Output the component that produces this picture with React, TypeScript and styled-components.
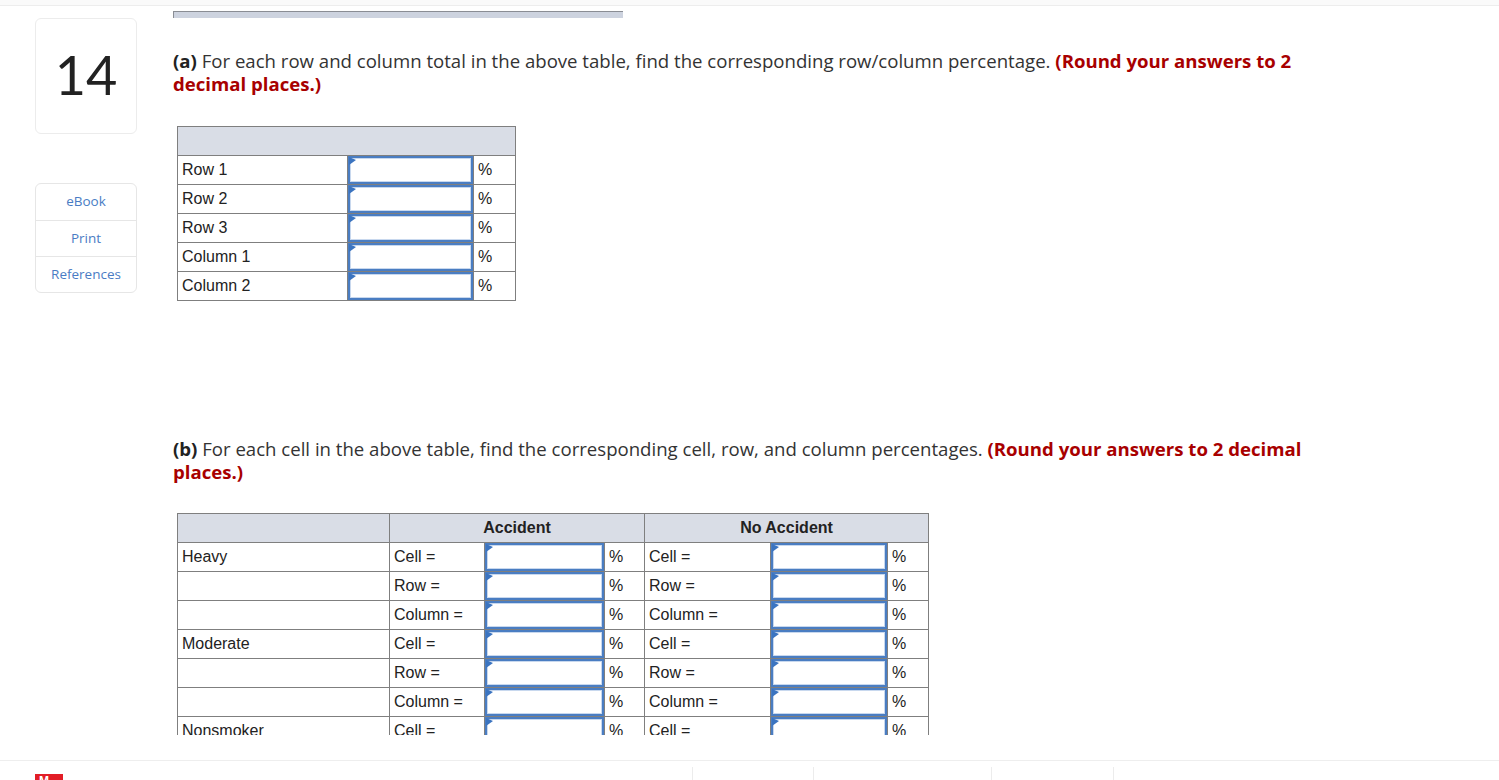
import React from 'react';
import styled, { createGlobalStyle } from 'styled-components';

const GlobalStyle = createGlobalStyle`
  html, body { margin: 0; padding: 0; background: #fff; }
  body { font-family: "Open Sans", Lato, sans-serif; color: #222; }
`;

const Page = styled.div`
  width: 1499px;
  height: 780px;
  display: flex;
  flex-direction: column;
  overflow: hidden;
  background: #fff;
`;

const TopBar = styled.div`
  flex: none;
  height: 5px;
  background: #fafafa;
  border-bottom: 1px solid #ededed;
`;

const Main = styled.div`
  flex: none;
  height: 729px;
  display: flex;
  overflow: hidden;
`;

const Aside = styled.aside`
  flex: none;
  width: 173px;
  box-sizing: border-box;
  padding: 12px 0 0 35px;
  display: flex;
  flex-direction: column;
  & > * { flex-shrink: 0; }
`;

const NumberBox = styled.div`
  width: 102px;
  height: 116px;
  box-sizing: border-box;
  border: 1px solid #ececec;
  border-radius: 6px;
  display: flex;
  align-items: center;
  justify-content: center;
  font-family: Lato, "Open Sans", sans-serif;
  font-size: 54px;
  color: #222;
  padding-bottom: 4px;
`;

const LinkList = styled.div`
  margin-top: 49px;
  width: 102px;
  box-sizing: border-box;
  border: 1px solid #e6e6e6;
  border-radius: 6px;
  display: flex;
  flex-direction: column;
`;

const LinkItem = styled.a`
  height: 36px;
  display: flex;
  align-items: center;
  justify-content: center;
  font-size: 13.5px;
  color: #4a7cc4;
  text-decoration: none;
  padding-bottom: 2px;
  box-sizing: border-box;
  & + & { border-top: 1px solid #e6e6e6; }
`;

const Content = styled.div`
  flex: 1;
  padding-top: 5px;
  display: flex;
  flex-direction: column;
  align-items: flex-start;
  & > * { flex-shrink: 0; }
`;

const Stub = styled.div`
  width: 450px;
  height: 7px;
  box-sizing: border-box;
  background: #cdd3df;
  border-top: 1px solid #8a8d94;
  border-left: 1px solid #8a8d94;
`;

const Prompt = styled.p<{ $gap: number }>`
  margin: ${p => p.$gap}px 0 0 0;
  max-width: 1142px;
  font-size: 18.6px;
  line-height: 23px;
  color: #333;
`;

const Label = styled.b`
  color: #222;
  font-weight: 700;
`;

const Hint = styled.b`
  color: #a80000;
  font-weight: 700;
`;

const DataTable = styled.table<{ $gap: number; $w: number }>`
  margin: ${p => p.$gap}px 0 0 4px;
  width: ${p => p.$w}px;
  border-collapse: collapse;
  table-layout: fixed;
  font-family: "Liberation Sans", Arial, sans-serif;
  font-size: 16px;
  color: #222;
`;

const Col = styled.col<{ $w: number }>`
  width: ${p => p.$w}px;
`;

const Row = styled.tr`
  height: 28.8px;
`;

const HeadCell = styled.th`
  background: #d9dde6;
  border: 1px solid #7f7f7f;
  padding: 0;
  font-weight: 700;
  text-align: center;
  color: #222;
`;

const Cell = styled.td`
  border: 1px solid #7f7f7f;
  padding: 0 4px;
  text-align: left;
  white-space: nowrap;
  vertical-align: middle;
`;

const InputCell = styled.td`
  border: 1px solid #7f7f7f;
  padding: 0;
  position: relative;
  &::before {
    content: '';
    position: absolute;
    left: 1px;
    top: 1px;
    width: 0;
    height: 0;
    border-left: 7px solid #3b74c0;
    border-top: 3px solid transparent;
    border-bottom: 5px solid transparent;
    z-index: 1;
  }
`;

const Answer = styled.input`
  display: block;
  width: 100%;
  height: 28px;
  box-sizing: border-box;
  margin: 0;
  border: 2px solid #4a7dc2;
  box-shadow: inset 0 0 0 1px #c8d8ee;
  background: #fff;
  outline: none;
`;

const Spacer = styled.div`
  flex: none;
  height: 25px;
`;

const Footer = styled.footer`
  flex: 1;
  border-top: 1px solid #eeeeee;
  display: flex;
  align-items: flex-start;
`;

const Logo = styled.div`
  margin: 13px 0 0 35px;
  width: 28px;
  height: 20px;
  background: #e21d26;
  color: #fff;
  font-family: "Liberation Sans", Arial, sans-serif;
  font-weight: 700;
  font-size: 12px;
  line-height: 14px;
  padding-left: 4px;
  box-sizing: border-box;
`;

const FooterNav = styled.nav`
  margin: 6px 0 0 629px;
  display: flex;
`;

const NavItem = styled.div<{ $w: number }>`
  width: ${p => p.$w}px;
  height: 20px;
  border-left: 1px solid #ececec;
  &:last-child { border-right: 1px solid #ececec; }
`;

const partA = ['Row 1', 'Row 2', 'Row 3', 'Column 1', 'Column 2'];

const groups = ['Heavy', 'Moderate', 'Nonsmoker'];
const subs = ['Cell =', 'Row =', 'Column ='];

export default function App() {
  return (
    <>
      <GlobalStyle />
      <Page>
        <TopBar />
        <Main>
          <Aside>
            <NumberBox>14</NumberBox>
            <LinkList>
              <LinkItem>eBook</LinkItem>
              <LinkItem>Print</LinkItem>
              <LinkItem>References</LinkItem>
            </LinkList>
          </Aside>
          <Content>
            <Stub />
            <Prompt $gap={31}>
              <Label>(a)</Label> For each row and column total in the above table, find the corresponding
              row/column percentage. <Hint>(Round your answers to 2 decimal places.)</Hint>
            </Prompt>
            <DataTable $gap={31} $w={339}>
              <colgroup>
                <Col $w={170} />
                <Col $w={126} />
                <Col $w={42} />
              </colgroup>
              <thead>
                <Row>
                  <HeadCell colSpan={3} />
                </Row>
              </thead>
              <tbody>
                {partA.map(l => (
                  <Row key={l}>
                    <Cell>{l}</Cell>
                    <InputCell><Answer type="text" /></InputCell>
                    <Cell>%</Cell>
                  </Row>
                ))}
              </tbody>
            </DataTable>
            <Prompt $gap={136}>
              <Label>(b)</Label> For each cell in the above table, find the corresponding cell, row, and
              column percentages. <Hint>(Round your answers to 2 decimal places.)</Hint>
            </Prompt>
            <DataTable $gap={30} $w={752}>
              <colgroup>
                <Col $w={212} />
                <Col $w={95} />
                <Col $w={120} />
                <Col $w={40} />
                <Col $w={126} />
                <Col $w={117} />
                <Col $w={41} />
              </colgroup>
              <thead>
                <Row>
                  <HeadCell />
                  <HeadCell colSpan={3}>Accident</HeadCell>
                  <HeadCell colSpan={3}>No Accident</HeadCell>
                </Row>
              </thead>
              <tbody>
                {groups.flatMap(g =>
                  subs.map((s, i) => (
                    <Row key={g + s}>
                      <Cell>{i === 0 ? g : ''}</Cell>
                      <Cell>{s}</Cell>
                      <InputCell><Answer type="text" /></InputCell>
                      <Cell>%</Cell>
                      <Cell>{s}</Cell>
                      <InputCell><Answer type="text" /></InputCell>
                      <Cell>%</Cell>
                    </Row>
                  ))
                )}
              </tbody>
            </DataTable>
          </Content>
        </Main>
        <Spacer />
        <Footer>
          <Logo>M</Logo>
          <FooterNav>
            <NavItem $w={120} />
            <NavItem $w={177} />
            <NavItem $w={121} />
          </FooterNav>
        </Footer>
      </Page>
    </>
  );
}
